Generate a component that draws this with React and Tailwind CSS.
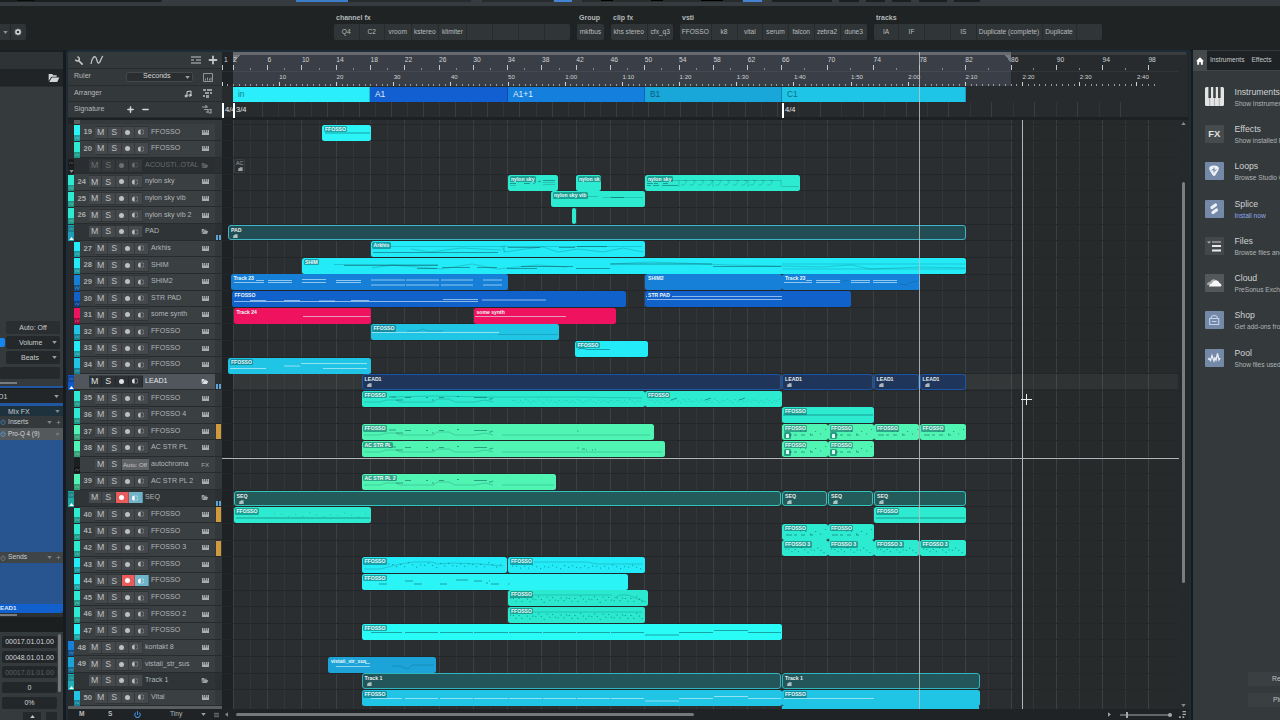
import { Power, Plus, Minus, Music } from 'lucide-react'
import clsx from 'clsx'

// The timeline canvas starts here, clip positions below are in window pixels
const ORIGIN = 222
const ROW = 16.635

const FX_GROUPS = [
  {
    title: 'channel fx',
    items: [['Q4', 25.5], ['C2', 25.5], ['vroom', 26.5], ['kstereo', 27.5], ['klimiter', 28], ['', 25.5], ['', 26], ['', 26], ['', 25.5]],
  },
  { title: 'Group', items: [['mkfbus', 27]] },
  { title: 'clip fx', items: [['khs stereo', 36.5], ['cfx_q3', 25.5]] },
  {
    title: 'vsti',
    items: [['FFOSSO', 31.5], ['k8', 26], ['vital', 25.5], ['serum', 26], ['falcon', 25.5], ['zebra2', 26], ['dune3', 26.5]],
  },
  {
    title: 'tracks',
    items: [['IA', 25], ['IF', 26], ['', 26], ['IS', 25.5], ['Duplicate (complete)', 66], ['Duplicate', 34], ['', 25.5]],
  },
]

const SECTIONS = [
  { name: 'in', from: 233, to: 370, bg: '#2aeefb', fg: '#137f8e' },
  { name: 'A1', from: 370, to: 508, bg: '#115fd0', fg: '#e3eefb' },
  { name: 'A1+1', from: 508, to: 645, bg: '#147fdc', fg: '#e3eefb' },
  { name: 'B1', from: 645, to: 782, bg: '#19a6d9', fg: '#0d5c7c' },
  { name: 'C1', from: 782, to: 965.5, bg: '#1fc5e6', fg: '#0d6d84' },
]

// bars run in 3/4 until bar 66, then in 4/4
const barX = (bar) => (bar <= 66 ? 233.3 + (bar - 2) * 8.573 : 782 + (bar - 66) * 11.45)
const BARS = Array.from({ length: 25 }, (_, i) => 2 + i * 4)
const HALF_BARS = Array.from({ length: 49 }, (_, i) => 2 + i * 2)
const secX = (s) => 222.2 + s * 5.717
const clock = (s) => (s < 60 ? `${s}` : `${Math.floor(s / 60)}:${String(s % 60).padStart(2, '0')}`)

// Small note patterns shown inside the clips
const scatter = (from, to, step, base, amp) => {
  let d = ''
  for (let x = from, i = 0; x < to; x += step, i++) {
    d += `M${x.toFixed(1)} ${(base + ((i * 7) % 5) * amp - ((i * 3) % 4) * amp * 0.5).toFixed(1)}h1.2`
  }
  return d
}
const climb = (from, to, step) => {
  let d = ''
  for (let x = from; x < to; x += step) d += `M${x} 10h3l3 -4M${x + 3} 5.5h3`
  return d
}
const LEAD = 'M27 6h7M34 9h7M43 6.5h6M64 6.5h2M70 9h2M77 6.5h5M95 5.5h2M112 6.5h13M127 8h2l2 -1'
const LEAD_LOW = 'M2 11h16l6 -2h10l4 2h34l3 -3h12l6 3h20l10 -2 8 2'
const LONG = 'M9 8.5h31M43 8.5h33M78 8.5h33M112 8.5h34M147 8.5h33M181 8.5h33M215 8.5h33M249 8.5h33M283 11h34M317 8.5h34M352 6.5h34M386 8.5h33'
const PHRASE = scatter(18, 44, 5, 7, 1) + 'M4 11h6M12 11h3M19 11h4M28 11h3'

const C = {
  cyan: '#2bf4f7', mint: '#2debd1', aqua: '#24ebf8', sky: '#20c4e5', blue: '#1680d9', deep: '#1161cb',
  pink: '#ee125f', green: '#50f5b4', azure: '#1ca4d8', navy: '#1257c4',
}

const clip = (from, to, name, color, notes, extra = {}) => ({ from, to, name, color, notes, ...extra })
const folder = (from, to, name, bg, edge) => ({ from, to, name, bg, edge, folder: true })
const LIGHT = { light: true, bare: true }

const TRACKS = [
  { no: 19, name: 'FFOSSO', color: C.cyan, clips: [clip(322, 370.5, 'FFOSSO', C.cyan, 'M3 8h45')] },
  { no: 20, name: 'FFOSSO', color: C.mint, clips: [] },
  { name: 'ACOUSTI..OTAL', top: true, kind: 'folder', muted: true, clips: [] },
  {
    no: 24, name: 'nylon sky', top: true, color: C.mint,
    clips: [
      clip(508, 558, 'nylon sky', C.mint, 'M2 8.5h6M16 8.5h6M25 9l3 -2M30 7l3 -1M35 5.5h12', { shade: 'M2 10.500h6M35 7.500h12M35 9.500h12' }),
      clip(576, 601, 'nylon sk', C.mint, ''),
      clip(645, 800, 'nylon sky', C.mint, 'M2 8.5h6M9 8.5h4M2 10.5h4M8 10.5h6M17 10.5h16M18 8.5h5', {
        shade: 'M26 5.500h110v6M34 5v7M68 5v7M103 5v7M137 11.500h17' + climb(36, 130, 8.6),
      }),
    ],
  },
  { no: 25, name: 'nylon sky vib', top: true, color: C.mint, clips: [clip(551, 645, 'nylon sky vib', C.mint, 'M60 6.5h13', { shade: 'M35 5.500h12M52 6.500h40' })] },
  { no: 26, name: 'nylon sky vib 2', top: true, color: C.mint, clips: [clip(571.5, 576, '', C.mint, '')] },
  { name: 'PAD', top: true, kind: 'folder', color: '#1e9fb5', meter: 'blue', clips: [folder(228, 965.5, 'PAD', '#224d55', '#3fb4c3')] },
  {
    no: 27, name: 'Arkhis', color: C.aqua,
    clips: [clip(370.5, 645, 'Arkhis', C.aqua, 'M2 11.5h125M137 6.5h32M188 6.5h16M206 5.5h30', {
      shade: 'M18 5.500h253M130 5l4 6 20 -3 18 -2 15 5 20 -3 25 3 20 -4 20 4M40 8l20 3 30 -4 40 2M133 4v8',
    })],
  },
  {
    no: 28, name: 'SHIM', color: C.aqua,
    clips: [clip(302, 965.5, 'SHIM', C.aqua, 'M42 7.5h94M115 10.5h20M140 9.500h28M175 9.500h20M205 10.500h30M219 8.500h52M274 10.5h34M308 6h102M411 8.5h68', {
      shade: 'M32 6.500h104M480 6h183M480 11h183M309 6l40 -2 80 3 50 1 40 1 30 -2 20 4 50 -2 50 1M70 10l20 -3 50 4 30 -5 25 5 40 -4 30 2',
    })],
  },
  {
    no: 29, name: 'SHIM2', color: C.blue,
    clips: [
      clip(230.5, 508, 'Track 23', C.blue, 'M25 6.5h8M3 8.5h30M37 6.5h24M37 8.5h24M71 5.5h24M71 8.5h24M105 6.5h25M105 8.5h25M140 6h34M175 6h33M210 6h32M140 11h34M175 11h33M210 11h32M252 6h19M252 11h19', LIGHT),
      clip(645, 781.5, 'SHIM2', C.blue, '', LIGHT),
      clip(782, 919.5, 'Track 23', C.blue, 'M24 6.5h6M2 8.5h28M34 6.5h24M34 8.5h24M69 6.5h19M69 8.5h19M91 6.5h24M91 8.5h24', { ...LIGHT, shade: 'M118 10l6 1 6 -3 6 -1M60 8l6 -2' }),
    ],
  },
  {
    no: 30, name: 'STR PAD', color: C.deep,
    clips: [
      clip(231.5, 625.5, 'FFOSSO', C.deep, 'M2 10.5h244M18 9.5h16M52 9.5h16M87 10h16M119 9.5h18M211 8.5h35M250 9h64', LIGHT),
      clip(645, 851, 'STR PAD', C.deep, 'M1 5.5h1M27 5.5h110M2 8.5h135', LIGHT),
    ],
  },
  {
    no: 31, name: 'some synth', color: C.pink,
    clips: [
      clip(233.5, 370.5, 'Track 24', C.pink, 'M69 8.5h67', LIGHT),
      clip(473.5, 616, 'some synth', C.pink, 'M1 8.5h91', LIGHT),
    ],
  },
  { no: 32, name: 'FFOSSO', color: C.sky, clips: [clip(370.5, 559, 'FFOSSO', C.sky, 'M1 8.5h127', { light: true, shade: 'M36 7h10l6 -2 4 2h16M127 10.500h60' })] },
  { no: 33, name: 'FFOSSO', color: C.aqua, clips: [clip(574.5, 648, 'FFOSSO', C.aqua, 'M3 8.5l2 -1h4l3 1h23')] },
  { no: 34, name: 'FFOSSO', color: C.sky, clips: [clip(228, 370.5, 'FFOSSO', C.sky, 'M2 10.5h36M56 8h16M73 5.5h66M95 10.5h44', { light: true })] },
  {
    name: 'LEAD1', top: true, kind: 'folder', color: C.navy, selected: true, meter: 'blue',
    clips: [
      folder(361.5, 781, 'LEAD1', '#20355a', '#1c56a8'), folder(782, 873, 'LEAD1', '#20355a', '#1c56a8'),
      folder(873.5, 919, 'LEAD1', '#20355a', '#1c56a8'), folder(919.5, 965.5, 'LEAD1', '#20355a', '#1c56a8'),
    ],
  },
  {
    no: 35, name: 'FFOSSO', color: C.mint,
    clips: [
      clip(361.5, 644.5, 'FFOSSO', C.mint, LEAD, { shade: LEAD_LOW + scatter(150, 280, 2.6, 9.5, 0.6) + 'M30 6l40 -1 60 1h80l70 1' }),
      clip(645, 782, 'FFOSSO', C.mint, 'M26 9l6 -2M60 9l6 -2M94 9l6 -2', { shade: scatter(4, 135, 2.6, 9, 0.7) }),
    ],
  },
  { no: 36, name: 'FFOSSO 4', color: C.mint, clips: [clip(782, 873.5, 'FFOSSO', C.mint, 'M1 8h90')] },
  {
    no: 37, name: 'FFOSSO', color: C.green, meter: 'orange',
    clips: [
      clip(361.5, 653.5, 'FFOSSO', C.green, LEAD + 'M215 7h1.5', { shade: LEAD_LOW + 'M140 11h148' }),
      clip(782, 827.5, 'FFOSSO', C.green, PHRASE, { lock: true }), clip(828, 873.5, 'FFOSSO', C.green, PHRASE, { lock: true }),
      clip(874, 919, 'FFOSSO', C.green, PHRASE), clip(919.5, 965.5, 'FFOSSO', C.green, PHRASE),
    ],
  },
  {
    no: 38, name: 'AC STR PL', color: C.green,
    clips: [
      clip(361.5, 665, 'AC STR PL', C.green, LEAD + 'M215 7h1.5M220 8h3M224 9h1M230 9h1M233 8.5h1', { shade: LEAD_LOW + 'M140 11h160' }),
      clip(782, 827.5, 'FFOSSO', C.green, PHRASE, { lock: true }), clip(828, 873.5, 'FFOSSO', C.green, PHRASE, { lock: true }),
    ],
  },
  { name: 'autochroma', kind: 'fx', clips: [] },
  { no: 39, name: 'AC STR PL 2', color: C.green, clips: [clip(361.5, 556, 'AC STR PL 2', C.green, LEAD, { shade: LEAD_LOW + 'M140 11h52' })] },
  {
    name: 'SEQ', top: true, kind: 'folder', color: '#22a9a6', armed: true, meter: 'blue',
    clips: [
      folder(233.5, 781, 'SEQ', '#235b5a', '#32c4bd'), folder(782, 827, 'SEQ', '#235b5a', '#32c4bd'),
      folder(828, 873, 'SEQ', '#235b5a', '#32c4bd'), folder(874, 965.5, 'SEQ', '#235b5a', '#32c4bd'),
    ],
  },
  {
    no: 40, name: 'FFOSSO', color: C.mint, meter: 'orange',
    clips: [
      clip(233.5, 370.5, 'FFOSSO', C.mint, 'M2 11h134', { shade: scatter(40, 134, 7, 7, 0.8) }),
      clip(874, 965.5, 'FFOSSO', C.mint, 'M2 11h89'),
    ],
  },
  { no: 41, name: 'FFOSSO', color: C.mint, clips: [clip(782, 827.5, 'FFOSSO', C.mint, PHRASE), clip(828, 873.5, 'FFOSSO', C.mint, PHRASE)] },
  {
    no: 42, name: 'FFOSSO 3', color: C.mint, meter: 'orange',
    clips: [[782, 827.5], [828, 873.5], [874, 919], [919.5, 965.5]].map(([a, b]) => clip(a, b, 'FFOSSO 3', C.mint, scatter(3, 43, 3.2, 9, 0.9))),
  },
  {
    no: 43, name: 'FFOSSO', color: C.aqua,
    clips: [
      clip(361.5, 506.5, 'FFOSSO', C.aqua, scatter(26, 142, 4, 7, 0.9), { shade: 'M2 12h16l20 -5 14 -2h18l5 2 14 -1 30 1 22 2' }),
      clip(508, 644.5, 'FFOSSO', C.aqua, scatter(4, 134, 4, 9, 0.7), { shade: 'M26 5h52l12 2h45' }),
    ],
  },
  { no: 44, name: 'FFOSSO', color: C.cyan, armed: true, clips: [clip(361.5, 628, 'FFOSSO', C.cyan, 'M17 10h8M43 7h8M52 10h8M78 10h7M94 6h12M112 7h8M124 9h2M127 7h1M129 10h8M146 10h1.5')] },
  { no: 45, name: 'FFOSSO', color: C.mint, clips: [clip(508, 648, 'FFOSSO', '#2ae9cf', scatter(2, 136, 2.8, 8, 1.1), { shade: 'M24 5h80M106 8l6 -3h8l10 4 8 3' })] },
  { no: 46, name: 'FFOSSO 2', color: C.mint, clips: [clip(508, 645, 'FFOSSO', '#2ae9cf', scatter(2, 134, 2.8, 8, 1.1), { shade: 'M24 5h110' })] },
  { no: 47, name: 'FFOSSO', color: C.cyan, clips: [clip(361.5, 782, 'FFOSSO', '#29fbf6', LONG)] },
  { no: 48, name: 'kontakt 8', top: true, color: C.blue, clips: [] },
  { no: 49, name: 'vistaii_str_sus', top: true, color: C.azure, clips: [clip(328, 435.5, 'vistaii_str_sus', C.azure, 'M37 6.5h5M8 9.5h34', { ...LIGHT, shade: 'M64 9h8l8 3 4 -4h22' })] },
  { name: 'Track 1', top: true, kind: 'folder', color: '#20aeb4', clips: [folder(361.5, 781, 'Track 1', '#23565b', '#2eb7be'), folder(782, 979.5, 'Track 1', '#23565b', '#2eb7be')] },
  {
    no: 50, name: 'Vital', color: C.sky,
    clips: [
      clip(361.5, 781.5, 'FFOSSO', C.sky, LONG, { light: true }),
      clip(782, 979.5, 'FFOSSO', C.sky, 'M2 8.5h90', { light: true }),
    ],
  },
]

const Arrow = ({ className }) => (
  <svg viewBox="0 0 6 4" className={clsx('w-[5px] h-[3px] shrink-0', className)}>
    <path d="M0 0h6L3 4z" fill="currentColor" />
  </svg>
)

const Keys = () => (
  <svg viewBox="0 0 7 5" className="w-[7px] h-[5px]">
    <path d="M0 0h7v5H0z" fill="#a9adaf" />
    <path d="M1.7 0v2.6M3.5 0v2.6M5.3 0v2.6" stroke="#45494b" strokeWidth="0.8" />
  </svg>
)

const Folder = ({ className }) => (
  <svg viewBox="0 0 12 9" className={className}>
    <path d="M0 8V0h4l1 1.3h4V3H3L0 8zM3.6 3.8H12L9.6 9H0.6z" fill="currentColor" />
  </svg>
)

// closed folder used inside the small clips
const MiniFolder = ({ className }) => (
  <svg viewBox="0 0 5 4" className={clsx('w-[5px] h-[4px]', className)}>
    <path d="M0 4l.6-3h.9L2 .3h2.600V4z" fill="currentColor" />
  </svg>
)

const Curve = ({ className }) => (
  <svg viewBox="0 0 14 10" className={className} fill="none" stroke="currentColor" strokeWidth="1.3">
    <path d="M1 9C2 3 4 1 5.500 2S7 9 9 8s2-6 4-7" />
  </svg>
)

const Gear = ({ className }) => (
  <svg viewBox="0 0 10 10" className={className} fill="none" stroke="currentColor">
    <circle cx="5" cy="5" r="2.500" strokeWidth="1.800" />
    <path d="M5 .8v1.400M5 7.800v1.400M.8 5h1.400M7.800 5h1.400M2 2l1 1M7 7l1 1M8 2L7 3M3 7L2 8" strokeWidth="1.500" />
  </svg>
)

function Toolbar() {
  return (
    <>
      <div className="h-[6px] bg-[#363b3f] flex items-start">
        <div className="w-[162px] h-[2px] bg-[#1d2022] rounded-br-sm flex justify-center">
          <div className="w-[18px] ml-[-110px] h-[1px] bg-[#0a0b0c]" />
        </div>
        <div className="w-[52px] ml-[134px] h-[2px] bg-[#3d7cc9]" />
        <div className="w-[123px] h-[2px] bg-[#272b2e]" />
        <div className="w-[71px] ml-[11px] h-[2px] bg-[#272b2e]" />
        <div className="w-[18px] ml-[1px] h-[2px] bg-[#4584d2]" />
        <div className="w-[160px] ml-[10px] h-[2px] bg-[#272b2e] flex justify-around">
          <i className="w-[12px] h-[1px] bg-black" />
          <i className="w-[12px] h-[1px] bg-black" />
          <i className="w-[22px] h-[1px] bg-black" />
        </div>
        <div className="w-[19px] ml-[1px] h-[2px] bg-[#4584d2]" />
        <div className="w-[60px] ml-[10px] h-[2px] bg-[#1d2022]" />
        <div className="w-[20px] ml-[7px] h-[2px] bg-[#1d2022]" />
        <div className="w-[19px] ml-[7px] h-[2px] bg-[#1d2022]" />
        <div className="w-[19px] ml-[7px] h-[2px] bg-[#1d2022]" />
        <div className="w-[28px] ml-[8px] h-[2px] bg-[#1d2022]" />
        <div className="w-[26px] ml-[7px] h-[2px] bg-[#1d2022]" />
      </div>
      <div className="h-[44px] bg-[#1f2324] flex items-start">
        <div className="mt-[18px] h-[16px] w-[26px] bg-[#2f3436] rounded-r-[2px] flex items-center text-[#d5d8d9]">
          <div className="w-[11px] h-full flex items-center justify-center border-r border-[#232728]">
            <Arrow className="text-[#8d9193]" />
          </div>
          <Gear className="w-[8px] h-[8px] ml-[3px]" />
        </div>
        <div className="ml-[308px] flex gap-[7px]">
          {FX_GROUPS.map((g) => (
            <div key={g.title}>
              <div className="h-[18px] pt-[6px] pl-[2px] text-[7px] leading-[11px] font-bold text-[#b4b8b9] whitespace-nowrap">{g.title}</div>
              <div className="flex h-[16px] rounded-[2px] bg-[#303537] overflow-hidden">
                {g.items.map(([label, w], i) => (
                  <div
                    key={i}
                    className="flex items-center justify-center border-r border-[#272b2d] last:border-r-0 text-[6.6px] text-[#b9bdbe] whitespace-nowrap"
                    style={{ width: w }}
                  >
                    {label}
                  </div>
                ))}
              </div>
            </div>
          ))}
        </div>
      </div>
    </>
  )
}

const Field = ({ children, dim }) => (
  <div className={clsx('h-[12px] ml-[2px] w-[55px] rounded-[2px] bg-[#23272a] flex items-center justify-center text-[7px]', dim ? 'text-[#5d6163]' : 'text-[#d5d8d9]')}>
    {children}
  </div>
)

function Inspector() {
  return (
    <aside className="w-[63px] shrink-0 flex flex-col bg-[#353a3d] text-[7px] text-[#c9cccd] overflow-hidden">
      <div className="h-[19px] bg-[#2e3335] border-t-2 border-[#1b1f21]" />
      <div className="h-[17px] bg-[#202426] flex items-center justify-end pr-[3px]">
        <Folder className="w-[12px] h-[8px] text-[#d2d4d5]" />
      </div>
      <div className="h-[235px] border-t border-[#292d30]" />
      <div className="h-[13px] ml-[6px] w-[54px] rounded-[2px] bg-[#2a2e31] flex items-center justify-center">Auto: Off</div>
      <div className="mt-[2px] h-[13px] flex">
        <div className="w-[5px] h-[9px] mt-[2px] mr-[1px] rounded-r-[2px] bg-[#1685f0]" />
        <div className="w-[54px] rounded-[2px] bg-[#24282a] flex items-center pl-[13px] pr-[3px] justify-between">Volume<Arrow className="text-[#9b9fa1]" /></div>
      </div>
      <div className="mt-[2px] h-[13px] ml-[6px] w-[54px] rounded-[2px] bg-[#24282a] flex items-center pl-[15px] pr-[3px] justify-between">Beats<Arrow className="text-[#9b9fa1]" /></div>
      <div className="mt-[3px] h-[12px] w-[60px] rounded-[2px] bg-[#26292c]" />
      <div className="mt-[3px] h-[2px] w-[17px] bg-[#797c7e]" />
      <div className="mt-[2px] h-[3px] bg-[#2157a0] border-b border-[#1a1d20]" />
      <div className="h-[14px] bg-[#222629] flex items-center justify-between pr-[4px]"><span className="ml-[-2px]">O1</span><Arrow className="text-[#9b9fa1]" /></div>
      <div className="h-[3px] bg-[#2157a0]" />
      <div className="h-[10px] bg-[#1e323e] flex items-center justify-between pl-[8px] pr-[3px]">Mix FX<Arrow className="text-[#7f888d]" /></div>
      <div className="h-[12px] bg-[#34393c] flex items-center gap-[2px] pr-[2px]">
        <Power size={6} strokeWidth={3} className="text-[#4287c5]" />
        <span className="flex-1 text-[6.8px]">Inserts</span>
        <Arrow className="text-[#7f8385] mr-[2px]" /><Plus size={5} strokeWidth={3} className="text-[#909496]" />
      </div>
      <div className="h-[12px] bg-[#54595b] flex items-center gap-[2px] text-[6.3px] text-[#d6d8d9]">
        <Power size={6} strokeWidth={3} className="text-[#62a8e0]" />
        Pro-Q 4 (9)
        <Arrow className="text-[#75797b] ml-auto mr-[3px]" />
      </div>
      <div className="h-[112px] bg-[#28558f]" />
      <div className="h-[11px] bg-[#3f4447] flex items-center gap-[2px] pr-[2px]">
        <Power size={6} strokeWidth={2.5} className="text-[#8b9092]" />
        <span className="flex-1 text-[6.8px]">Sends</span>
        <Arrow className="text-[#7f8385] mr-[2px]" /><Plus size={5} strokeWidth={3} className="text-[#909496]" />
      </div>
      <div className="h-[41px] bg-[#28558f]" />
      <div className="h-[9px] bg-[#1260cd] flex items-center font-bold text-[6.2px] text-[#dbe8fa] rounded-br-[3px]">EAD1</div>
      <div className="h-[4px] bg-[#2b3033] pt-[1px]"><div className="w-[17px] h-[2px] bg-[#797c7e]" /></div>
      <div className="h-[15px] bg-[#1c1f20]" />
      <div className="flex-1 flex min-h-0 pt-[4px]">
        <div className="flex flex-col gap-[3.5px]">
          <Field>00017.01.01.00</Field>
          <Field>00048.01.01.00</Field>
          <Field dim>00017.01.01.00</Field>
          <Field>0</Field>
          <Field>0%</Field>
          <div className="ml-[23px] flex gap-[5px] shrink-0">
            <div className="w-[18px] h-[8px] bg-[#26292c] flex items-center justify-center">
              <Arrow className="rotate-180" />
            </div>
            <div className="w-[11px] h-[8px] bg-[#26292c]" />
          </div>
        </div>
        <div className="ml-[1px] mt-[-2px] w-[3px] h-[58px] bg-[#75797b] rounded-full" />
      </div>
    </aside>
  )
}

const HeadRow = ({ children, className }) => (
  <div className={clsx('flex items-center bg-[#33383b] border-b border-[#282c2f] pl-[6px] text-[7.1px] text-[#b5b9ba]', className)}>{children}</div>
)

function RulerHead() {
  return (
    <div className="w-[154px] shrink-0">
      <HeadRow className="h-[17px] text-[#c2c5c6]">
        <svg viewBox="0 0 10 10" className="w-[10px] h-[9px]" fill="none" stroke="currentColor">
          <path d="M4.500 5L8.500 9" strokeWidth="1.900" strokeLinecap="round" />
          <path d="M3.200 1.200q2.500.3 2.200 2.800-.6 1.800-2.400 1.600-1.500-.2-2-1.800" strokeWidth="1.600" />
        </svg>
        <Curve className="w-[14px] h-[10px] ml-[6px]" />
        <svg viewBox="0 0 10 8" className="w-[10px] h-[8px] ml-[87px]" stroke="currentColor" strokeWidth="1.2">
          <path d="M0 1h10M0 4h3M5 4h5M0 7h10" />
        </svg>
        <Plus size={12} strokeWidth={3.6} className="ml-[6px] shrink-0" />
      </HeadRow>
      <HeadRow className="h-[17px]">
        <span className="w-[52px]">Ruler</span>
        <div className="w-[67px] h-[10px] rounded-[2px] border border-[#43484b] bg-[#2a2e31] flex items-center justify-between pl-[16px] pr-[2px] text-[#d5d8d9]">
          Seconds<Arrow className="text-[#9b9fa1]" />
        </div>
        <svg viewBox="0 0 10 9" className="w-[10px] h-[9px] ml-[10px]" fill="none" stroke="#9b9fa1">
          <path d="M.5 .5h9v8h-9zM2.500 7.500v-2M4.500 7.500v-3M6.500 7.500v-2M8 7.500v-3" strokeWidth="0.9" />
        </svg>
      </HeadRow>
      <HeadRow className="h-[16px]">
        <span className="w-[110px]">Arranger</span>
        <Music size={8} strokeWidth={3} className="text-[#cfd2d3]" />
        <svg viewBox="0 0 9 9" className="w-[9px] h-[9px] ml-[11px]" fill="#9b9fa1">
          <path d="M0 0h3v2H0zM4 0h5v2H4zM2 3h4v2H2zM7 3h2v2H7zM0 6h2v2H0zM3 6h3v3H3z" />
        </svg>
      </HeadRow>
      <HeadRow className="h-[16px]">
        <span className="w-[52px]">Signature</span>
        <Plus size={9} strokeWidth={4} className="text-[#d5d8d9]" />
        <Minus size={9} strokeWidth={4} className="ml-[6px] text-[#d5d8d9]" />
        <svg viewBox="0 0 10 9" className="w-[10px] h-[9px] ml-[52px]" fill="none" stroke="#9b9fa1">
          <path d="M0 2h6M2 4.500h4M4 7h3M4 0v3M6 4v4M7 4.500h2v3.500h-2" strokeWidth="1.2" />
        </svg>
      </HeadRow>
    </div>
  )
}

function Ruler() {
  return (
    <div className="w-[966px] bg-[#272b2d]">
      <div className="relative h-[34px] overflow-hidden">
        <div className="flex h-full">
          <div className="w-[11px] bg-[#1f2325]" />
          <div className="w-[778px] bg-[#3a3f47] border-t-[3px] border-[#66696e]" />
          <div className="w-[175px] border-t-[3px] border-[#393d40]" />
        </div>
        <svg className="absolute inset-0 w-full h-full" viewBox="222 52 966 34" shapeRendering="crispEdges">
          <path d="M233 55h7l-7 7zM1011 55h-6l6 8z" fill="#777b80" />
          {HALF_BARS.map((b) => (
            <path key={b} d={b % 4 === 2 ? `M${barX(b)} 65v5` : `M${barX(b)} 68v2`} stroke={b % 4 === 2 ? '#c3c6c8' : '#85898c'} />
          ))}
          <path d="M222.5 65v5" stroke="#c3c6c8" />
          {Array.from({ length: 164 }, (_, s) => (
            <path key={s} d={s % 10 === 0 ? `M${secX(s)} 82v4` : `M${secX(s)} 84v2`} stroke={s % 10 === 0 ? '#d0d3d5' : '#989ca0'} />
          ))}
          <path d="M222 71.500H1178" stroke="#ffffff" strokeOpacity="0.05" />
        </svg>
        <span className="absolute left-[2px] top-[4px] text-[6.7px] leading-[8px] text-[#cfd2d4]">1</span>
        {BARS.map((b) => (
          <span key={b} className="absolute top-[4px] text-[6.7px] leading-[8px] text-[#cfd2d4]" style={{ left: barX(b) - ORIGIN }}>
            {b}
          </span>
        ))}
        {Array.from({ length: 16 }, (_, i) => (i + 1) * 10).map((s) => (
          <span key={s} className="absolute top-[20.5px] text-[6.1px] leading-[8px] text-[#cfd2d4]" style={{ left: secX(s) - ORIGIN }}>
            {clock(s)}
          </span>
        ))}
      </div>
      <div className="h-[16px] pl-[11px] flex">
        {SECTIONS.map((s) => (
          <div
            key={s.name}
            className="h-[15px] mt-[0.5px] pl-[5px] flex items-center text-[8.4px] border-r border-black/20"
            style={{ width: s.to - s.from, background: s.bg, color: s.fg }}
          >
            {s.name}
          </div>
        ))}
      </div>
      <div className="relative h-[16px] border-b border-[#1d2022] bg-[#272b2d] text-[7.5px] text-[#e4e6e7]">
        <svg className="absolute inset-0 w-full h-full" viewBox="222 102 966 16" shapeRendering="crispEdges">
          {HALF_BARS.map((b) => <path key={b} d={`M${barX(b)} 102v16`} stroke={b % 4 === 2 ? '#3a3f41' : '#303537'} />)}
        </svg>
        <span className="absolute left-0 top-px w-[11px] h-[15px] border-l-2 border-white pl-px pt-[3px] overflow-hidden">4/4</span>
        <span className="absolute left-[11px] top-px h-[15px] border-l-2 border-white pl-px pt-[3px]">3/4</span>
        <span className="absolute left-[559.5px] top-px h-[15px] border-l-2 border-white pl-[1.5px] pt-[3px]">4/4</span>
      </div>
    </div>
  )
}

const TrackButton = ({ children, className }) => (
  <div className={clsx('h-full w-[13.5px] shrink-0 flex items-center justify-center border-r border-black/20', className)}>{children}</div>
)

function TrackHead({ track }) {
  const { no, name, top, kind, muted, color, armed, selected, meter } = track
  const strip = (
    <div className="w-[6px] shrink-0 h-full flex flex-col border-t border-[#25292b]" style={{ background: color || '#1c1f21' }}>
      {kind === 'folder' && <div className="h-[1px]" />}
      <div className={clsx('w-full h-[6px] flex items-center justify-center', kind === 'folder' ? 'bg-black/20 text-white/40' : 'mt-auto bg-black/35 text-white/50')}>
        <Curve className="w-[5px] h-[4px]" />
      </div>
      {kind === 'folder' && <Arrow className={clsx('mt-auto mb-[1px] w-[4px] mx-auto', muted ? 'text-[#85898b]' : 'rotate-180 text-white')} />}
    </div>
  )
  return (
    <div className="w-[154px] shrink-0 h-full flex bg-[#272b2e]">
      {!top && <div className="w-[6px] shrink-0" />}
      {strip}
      <div
        className={clsx(
          'flex-1 min-w-0 flex items-center border-b border-[#272b2d] pr-[6px]',
          selected ? 'bg-[#50565c]' : muted ? 'bg-[#2a2e30]' : kind === 'folder' ? 'bg-[#2f3436]' : 'bg-[#3a3f42]',
        )}
      >
        <div className="w-[14.5px] pr-[2.5px] shrink-0 text-[7.6px] font-semibold text-[#a9adaf] text-right">{no}</div>
        <div
          className={clsx(
            'w-[54px] h-[13px] shrink-0 flex items-center text-[8.8px] border-y rounded-[1px] overflow-hidden',
            selected ? 'bg-[#2d3135] border-[#3c4146] text-[#e0e2e3]' : muted ? 'bg-[#35393b] border-[#303436] text-[#6c7072]' : 'bg-[#45494c] border-[#303437] text-[#bdc0c2]',
          )}
        >
          <TrackButton>M</TrackButton>
          <TrackButton>S</TrackButton>
          {kind === 'fx' ? (
            <div className="w-[27px] h-full shrink-0 bg-[#606365] text-[6.1px] text-[#c3c6c7] flex items-center justify-center whitespace-nowrap">Auto: Off</div>
          ) : (
            <>
              <TrackButton className={armed && 'bg-[#ea5c5c] text-white'}>
                <i className="w-[5px] h-[5px] rounded-full bg-current" />
              </TrackButton>
              <TrackButton className={armed && 'bg-[#6fb4c9] text-white'}>
                <svg viewBox="0 0 6 6" className="w-[6px] h-[6px]">
                  <path d="M2.600 0.400a2.600 2.600 0 000 5.200z" fill="currentColor" />
                  <path d="M3.600 .6a2.400 2.400 0 010 4.800" fill="none" stroke="currentColor" strokeWidth="0.6" opacity="0.7" />
                </svg>
              </TrackButton>
            </>
          )}
        </div>
        <div className={clsx('pl-[2.5px] text-[7.1px] flex-1 whitespace-nowrap', muted ? 'text-[#686c6e]' : selected ? 'text-[#e4e6e8]' : 'text-[#b2b6b8]')}>{name}</div>
        {kind === 'folder' && <Folder className={clsx('w-[8px] h-[5px] shrink-0', muted ? 'text-[#5d6163]' : selected ? 'text-[#dcdee0]' : 'text-[#9b9fa1]')} />}
        {kind === 'fx' && <span className="text-[6px] text-[#a9adaf]">FX</span>}
        {!kind && <Keys />}
      </div>
      <div className={clsx('w-[7px] shrink-0 h-full flex items-end gap-px border-b border-[#272b2d] pl-px', kind === 'folder' ? 'bg-[#2c3033]' : 'bg-[#33383a]')}>
        {meter === 'orange' && <i className="w-[5px] h-[15px] bg-[#cf9a3e]" />}
        {meter === 'blue' && (
          <>
            <i className="w-[2px] h-[5px] bg-[#5da4d0]" />
            <i className="w-[2px] h-[5px] bg-[#5da4d0]" />
          </>
        )}
      </div>
    </div>
  )
}

function Clip({ c }) {
  const box = { left: c.from - ORIGIN, width: c.to - c.from }
  if (c.folder) {
    return (
      <div
        className="absolute top-[0.5px] h-[15.5px] rounded-[3px] border-[1.4px] pl-[2px] overflow-hidden text-[#e8eeee]"
        style={{ ...box, background: c.bg, borderColor: c.edge }}
      >
        <div className="text-[5.2px] leading-[6px] pt-[1px] font-bold whitespace-nowrap">{c.name}</div>
        <MiniFolder className="ml-[2px] mt-[1px] opacity-70" />
      </div>
    )
  }
  return (
    <div className="absolute top-[0.5px] h-[16px] rounded-[2.5px] overflow-hidden" style={{ ...box, background: c.color }}>
      <svg className="absolute inset-0 w-full h-full" fill="none" strokeWidth="0.8">
        {c.shade && <path d={c.shade} stroke="#063a44" strokeOpacity="0.3" strokeWidth="0.7" />}
        <path d={c.notes} stroke={c.light ? '#dff6ff' : '#06454c'} strokeOpacity={c.light ? 0.75 : 0.6} />
      </svg>
      {c.name && (
        <span
          className={clsx(
            'absolute left-[1.5px] top-[1px] px-[1.5px] h-[6.5px] rounded-[1.5px] text-[5.1px] leading-[6.5px] font-bold text-[#effafa] whitespace-nowrap',
            !c.bare && 'bg-[#0a5a5c]/50',
          )}
        >
          {c.name}
        </span>
      )}
      {c.lock && (
        <span className="absolute left-[2px] top-[8px] w-[7px] h-[7px] rounded-[1.5px] bg-[#0a5a5c]/55 flex items-center justify-center">
          <i className="w-[3px] h-[4px] bg-[#dffbef] rounded-[0.5px]" />
        </span>
      )}
    </div>
  )
}

function Grid() {
  return (
    <svg className="absolute left-[154px] top-0 w-[956px] h-[589px]" viewBox="222 120 956 589" shapeRendering="crispEdges">
      <path d="M222 120h956v589H222z" fill="#2a2e30" />
      <path d="M222 120h11v589h-11z" fill="#1f2224" />
      <path d="M1011 120h167v589h-167z" fill="#262a2b" />
      {HALF_BARS.map((b) => (
        <path key={b} d={`M${barX(b)} 120v589`} stroke={b % 4 === 2 ? '#3b4042' : '#323638'} />
      ))}
      {TRACKS.map((_, i) => (
        <path key={i} d={`M222 ${124.3 + i * ROW}h956`} stroke="#23272a" />
      ))}
      <path d={`M233 ${124.3 + 15 * ROW}h945v${ROW - 1}h-945z`} fill="#ffffff" fillOpacity="0.045" />
    </svg>
  )
}

function Arrangement() {
  return (
    <main className="relative w-[1125px] ml-[3px] shrink-0 flex flex-col bg-[#202426] border-2 border-b-0 border-[#1d2c38] rounded-t-[3px] overflow-hidden">
      <div className="flex h-[68px] shrink-0 border-b-2 border-[#1d2022]">
        <RulerHead />
        <Ruler />
      </div>
      <div className="relative h-[589px] shrink-0 flex overflow-hidden">
        <Grid />
        <div className="relative w-[1110px] h-full">
          <div className="h-[4.3px] w-[154px] pl-[6px] flex">
            <div className="w-[6px] bg-[#5c5f60]" />
            <div className="flex-1 bg-[#34393b]" />
          </div>
          {TRACKS.map((t, i) => (
            <div key={i} className="flex h-[16.635px]">
              <TrackHead track={t} />
              <div className="relative flex-1">
                {t.clips.map((c, j) => <Clip key={j} c={c} />)}
                {t.muted && (
                  <div className="absolute left-[12px] top-[1px] w-[11px] h-[14px] rounded-[2px] border border-[#3a3e40] text-[5.2px] leading-[6px] text-[#a1a5a6] pl-[1px]">
                    AC
                    <MiniFolder className="ml-[2px] mt-px" />
                  </div>
                )}
              </div>
            </div>
          ))}
          <div className="h-[16px] flex">
            <div className="w-[154px] bg-[#5a5e60]" />
            <div className="ml-[560px] w-[197px] bg-[#20c4e5]" />
          </div>
        </div>
        <div className="relative w-[11px] bg-[#25292b] flex flex-col items-center">
          <Arrow className="mt-[2px] rotate-180 text-[#85898b]" />
          <div className="mt-[57px] w-[3px] h-[401px] rounded-full bg-[#797d80]" />
          <Arrow className="mt-auto mb-[2px] text-[#85898b]" />
        </div>
      </div>
      <footer className="flex-1 bg-[#1f2325] flex items-center text-[6.6px] font-bold text-[#b9bdbe]">
        <div className="w-[154px] flex items-center pl-[11px]">
          <span className="w-[29px]">M</span>
          <span className="w-[26px]">S</span>
          <Power size={7} strokeWidth={3.5} className="text-[#3f8fd8]" />
          <span className="ml-[29px] font-normal w-[31px]">Tiny</span>
          <Arrow className="text-[#9b9fa1]" />
          <svg viewBox="0 0 6 6" className="w-[5px] h-[6px] ml-[8px]" stroke="#797d80"><path d="M0 1h6M0 3h6M0 5h6" /></svg>
        </div>
        <Arrow className="rotate-90 ml-[2px] text-[#85898b]" />
        <div className="ml-[7px] w-[458px] h-[3px] rounded-full bg-[#75797b]" />
        <Arrow className="-rotate-90 ml-[413px] text-[#9b9fa1]" />
        <svg viewBox="0 0 52 6" className="ml-[8px] w-[52px] h-[6px]" fill="#a5a9ab">
          <path d="M0 2.500h50v1H0zM6 0h2v6H6z" />
          <circle cx="50" cy="3" r="2" />
        </svg>
        <svg viewBox="0 0 8 8" className="ml-[7px] w-[7px] h-[7px]" fill="#a5a9ab"><path d="M4 0h4v1.500H4zM4 3h4v1.500H4zM0 6h2v2H0zM4 6h2v2H4z" /></svg>
      </footer>

      {/* playhead and crosshair, over everything */}
      <div className="absolute left-[851px] top-0 w-px h-[657px] bg-[#bfc4c6]/80" />
      <div className="absolute left-[954px] top-[68px] w-px h-[589px] bg-[#b2b6b8]" />
      <div className="absolute left-[154px] top-[406px] w-[957px] h-px bg-[#b2b6b8]" />
      <svg className="absolute left-[953px] top-[342px] w-[11px] h-[11px]" stroke="#e9ebec"><path d="M5.500 0v11M0 5.500h11" /></svg>
    </main>
  )
}

const BROWSER = [
  ['Instruments', 'Show Instruments'],
  ['Effects', 'Show installed Effects'],
  ['Loops', 'Browse Studio One loops'],
  ['Splice', 'Install now'],
  ['Files', 'Browse files and folders'],
  ['Cloud', 'PreSonus Exchange'],
  ['Shop', 'Get add-ons from'],
  ['Pool', 'Show files used in'],
]

const ICONS = {
  Instruments: (
    <svg viewBox="0 0 19 19" className="w-[19px] h-[19px] shrink-0">
      <rect width="19" height="19" rx="1.500" fill="#e3e4e4" />
      <path d="M4.700 11v8M9.500 11v8M14.300 11v8" stroke="#95999a" strokeWidth="0.7" />
      <path d="M3.400 0h2.600v11H3.400zM8.200 0h2.600v11H8.200zM13 0h2.600v11H13z" fill="#3d4244" />
    </svg>
  ),
  Effects: <b className="text-[9.5px] text-[#e0e2e2]">FX</b>,
  Loops: (
    <svg viewBox="0 0 18 16" className="w-[18px] h-[16px]">
      <path d="M5 3.500q4-2 8 0 1.500 1 .5 3.500L10.500 12q-1.500 2-3 0L4.500 7Q3.500 4.500 5 3.500z" fill="#eef1f4" />
      <path d="M6.500 7.500l2-1.500 1 2 2-1.500M9 4.500v5" stroke="#7488a8" fill="none" strokeWidth="1" />
    </svg>
  ),
  Splice: (
    <svg viewBox="0 0 18 16" className="w-[18px] h-[16px]" stroke="#eef1f4" strokeWidth="3.200" strokeLinecap="round">
      <path d="M7 6.500l3.500-2.500M8 11.500l3.500-2.500" />
    </svg>
  ),
  Files: (
    <svg viewBox="0 0 18 16" className="w-[18px] h-[16px]">
      <path d="M2 3.500h4l-2 2z" fill="#b8bbbc" />
      <path d="M7 4h9" stroke="#9ea2a4" strokeWidth="1.500" />
      <path d="M7 8h9M7 12.500h9" stroke="#e9ebeb" strokeWidth="2" />
    </svg>
  ),
  Cloud: (
    <svg viewBox="0 0 18 16" className="w-[18px] h-[16px]">
      <path d="M2 10q0-3 3-3 2-4 6-2 3 1 3 4z" fill="#a9adaf" />
      <path d="M4 11.500q0-2.500 3-3 1-3.500 4.500-3 2.500.5 3 2.500 2 .5 2 2.500-.2 1-1.500 1z" fill="#f5f6f6" />
    </svg>
  ),
  Shop: (
    <svg viewBox="0 0 18 16" className="w-[18px] h-[16px]" fill="none" stroke="#c2d3e6" strokeWidth="1.100">
      <path d="M4.700 6.500h9v6h-9zM6 6.500q0-3 3.200-3t3.200 3M7 9.500h4.500" />
    </svg>
  ),
  Pool: (
    <svg viewBox="0 0 18 16" className="w-[18px] h-[16px]" fill="none" stroke="#e6ecf3" strokeWidth="1.300">
      <path d="M3 9.500l1-1 1.500 2L7 5.500l2 5.500 1-3 1 2 1.500-6.500L14 10l1.200-2" />
    </svg>
  ),
}

const ICON_BG = {
  Instruments: '',
  Effects: 'bg-[#474b4e]',
  Files: 'bg-[#44484b]',
  Cloud: 'bg-[#54585a]',
}

function Browser() {
  return (
    <aside className="ml-[2px] w-[87px] shrink-0 flex flex-col bg-[#34393c] overflow-hidden">
      <div className="h-[20px] mt-px bg-[#1e2224] border-b border-[#3f4447] flex items-center text-[6.6px] text-[#c6c9cb] whitespace-nowrap">
        <div className="w-[14px] h-[21px] shrink-0 bg-[#44494c] flex items-center justify-center">
          <svg viewBox="0 0 8 8" className="w-[8px] h-[8px]">
            <path d="M4 0.300L8 4.300H6.800V7.800H4.900V5.300H3.100V7.800H1.200V4.300H0z" fill="#ffffff" />
          </svg>
        </div>
        <span className="ml-[3px]">Instruments</span>
        <span className="ml-[7px]">Effects</span>
      </div>
      <div className="mt-[9px] flex flex-col">
        {BROWSER.map(([title, text]) => (
          <div key={title} className="h-[37.3px] flex items-center gap-[11px] pl-[12px] shrink-0 whitespace-nowrap">
            <div className={clsx('w-[18.5px] h-[18px] shrink-0 mt-[-4px] flex items-center justify-center rounded-[1px]', ICON_BG[title] ?? 'bg-[#7488a8]')}>
              {ICONS[title]}
            </div>
            <div className="mt-[-4px]">
              <div className="text-[8.7px] leading-[12px] text-[#d0d3d4]">{title}</div>
              <div className={clsx('text-[6.6px] leading-[9px] mt-px', title === 'Splice' ? 'text-[#8fa9ea]' : 'text-[#b0b4b5]')}>{text}</div>
            </div>
          </div>
        ))}
      </div>
      <div className="mt-auto mb-[13px] ml-[55px] flex flex-col gap-[7px] text-[6.8px] text-[#c0c4c5] whitespace-nowrap">
        <div className="h-[14px] bg-[#3a3f42] pl-[24px] flex items-center">Redeem</div>
        <div className="h-[14px] bg-[#3a3f42] pl-[25px] flex items-center">Plug-ins</div>
      </div>
    </aside>
  )
}

export default function App() {
  return (
    <div className="w-[1280px] h-[720px] overflow-hidden flex flex-col bg-[#171b1e] font-['Liberation_Sans',Arial,sans-serif] leading-none select-none">
      <Toolbar />
      <div className="flex-1 min-h-0 flex">
        <Inspector />
        <Arrangement />
        <Browser />
      </div>
    </div>
  )
}
